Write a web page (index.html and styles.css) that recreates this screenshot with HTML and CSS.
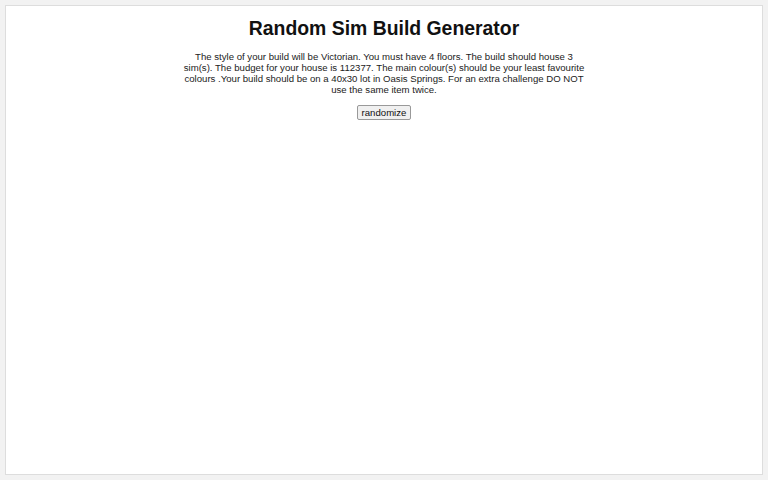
FILE: index.html
```html
<!DOCTYPE html>
<html lang="en">
<head>
    <meta charset="UTF-8">
    <meta name="viewport" content="width=device-width, initial-scale=1.0">
    <title>Random Sim Build Generator</title>
    <link rel="stylesheet" href="styles.css">
</head>
<body>
    <div class="container">
        <h1>Random Sim Build Generator</h1>
        <p id="build">The style of your build will be Victorian. You must have 4 floors. The build should house 3 sim(s). The budget for your house is 112377. The main colour(s) should be your least favourite colours .Your build should be on a 40x30 lot in Oasis Springs. For an extra challenge DO NOT use the same item twice.</p>
        <button class="randomize">randomize</button>
    </div>
</body>
</html>
```
FILE: styles.css
```css
body {
    font-family: 'Liberation Sans', Arial, sans-serif;
    background-color: #f2f2f2;
    margin: 0;
    padding: 4px;
    color: #111;
}
.container {
    height: 470px;
    box-sizing: border-box;
    background-color: #ffffff;
    border: 1px solid #dddddd;
    margin: 1px;
    padding-top: 11px;
    text-align: center;
}
h1 {
    font-size: 19.4px;
    margin: 0 0 11px 0;
    line-height: 23px;
}
#build {
    max-width: 402px;
    margin: 0 auto 7px auto;
    font-size: 9.6px;
    line-height: 11px;
    color: #222;
}
.randomize {
    font-family: 'Liberation Sans', Arial, sans-serif;
    font-size: 9.6px;
    padding: 1px 4px;
    background-color: #f0f0f0;
    border: 1px solid #999;
    border-radius: 2px;
    color: #111;
}
```
